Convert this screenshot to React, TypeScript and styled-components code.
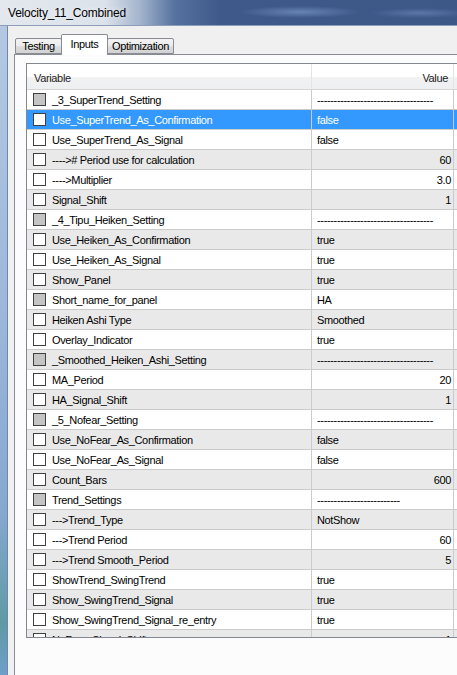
import React from 'react'
import styled, { createGlobalStyle } from 'styled-components'

const GlobalStyle = createGlobalStyle`
  html, body {
    margin: 0;
    padding: 0;
    background: #f0f0f0;
  }
  body {
    font-family: "Liberation Sans", Arial, sans-serif;
    font-size: 11px;
    letter-spacing: -0.35px;
    color: #000;
  }
`

const Window = styled.div`
  display: flex;
  flex-direction: column;
  width: 100%;
  height: 100vh;
  overflow: hidden;
`

const TitleBar = styled.div`
  display: flex;
  align-items: center;
  height: 25px;
  flex-shrink: 0;
  padding-left: 8px;
  border-bottom: 1px solid #8b9fbd;
  background:
    radial-gradient(ellipse 60px 6px at 300px 12px, rgba(120, 150, 200, 0.7), transparent),
    radial-gradient(ellipse 50px 5px at 420px 13px, rgba(110, 140, 190, 0.6), transparent),
    linear-gradient(90deg, #e3e8ee 0, #dbe2ea 105px, #a3b4cc 140px, #55719f 175px, #3f5a8a 220px, #3d5787 100%);
`

const TitleText = styled.span`
  font-size: 12px;
  letter-spacing: -0.2px;
  color: #000;
  text-shadow: 0 0 6px rgba(255, 255, 255, 0.9);
`

const Frame = styled.div`
  display: flex;
  flex: 1;
  min-height: 0;
`

const LeftEdge = styled.div`
  width: 7px;
  flex-shrink: 0;
  border-right: 1px solid #6f87aa;
  background: linear-gradient(180deg, #b4c8e2 0, #9fb9db 40%, #86a8cf 75%, #5f9aa4 92%, #6e9fc8 100%);
`

const Body = styled.div`
  display: flex;
  flex-direction: column;
  flex: 1;
  min-width: 0;
  padding: 8px 0 0 6px;
  background: #f0f0f0;
`

const TabStrip = styled.div`
  display: flex;
  align-items: flex-end;
  height: 20px;
  padding-left: 1px;
  position: relative;
  z-index: 1;
`

const Tab = styled.div<{ $active?: boolean; $w: number }>`
  display: flex;
  align-items: center;
  justify-content: center;
  box-sizing: border-box;
  width: ${p => p.$w}px;
  height: ${p => (p.$active ? 21 : 16)}px;
  margin-bottom: ${p => (p.$active ? -1 : 0)}px;
  padding-bottom: ${p => (p.$active ? 3 : 0)}px;
  border: 1px solid #898c95;
  border-bottom: ${p => (p.$active ? 'none' : '1px solid #898c95')};
  border-radius: 2px 2px 0 0;
  margin-right: -1px;
  background: ${p =>
    p.$active ? '#ffffff' : 'linear-gradient(180deg, #f3f3f3 0, #ebebeb 50%, #dedede 51%, #d2d2d2 100%)'};
`

const TabPanel = styled.div`
  flex: 1;
  margin-right: -40px;
  padding: 8px 0 0 11px;
  border-top: 1px solid #898c95;
  border-left: 1px solid #898c95;
  background: #fcfcfc;
`

const Grid = styled.div`
  box-sizing: border-box;
  height: 575px;
  overflow: hidden;
  border: 1px solid #828790;
  border-right: none;
  background: #ffffff;
`

const cols = '285px 142px 1fr'

const HeaderRow = styled.div`
  display: grid;
  grid-template-columns: ${cols};
  box-sizing: border-box;
  height: 26px;
  border-bottom: 1px solid #d5d5d5;
  background: linear-gradient(180deg, #ffffff 0, #ffffff 50%, #f2f2f3 51%, #eeeff1 100%);
`

const HeaderCell = styled.div<{ $right?: boolean }>`
  display: flex;
  align-items: center;
  justify-content: ${p => (p.$right ? 'flex-end' : 'flex-start')};
  padding: 2px ${p => (p.$right ? 5 : 0)}px 0 ${p => (p.$right ? 0 : 7)}px;
  border-right: 1px solid #e3e4e6;
  color: #1e1e1e;
`

const Row = styled.div<{ $shade?: boolean; $selected?: boolean }>`
  display: grid;
  grid-template-columns: ${cols};
  box-sizing: border-box;
  height: 20px;
  border-bottom: 1px solid #cbcbcb;
  background: ${p => (p.$selected ? '#3399ff' : p.$shade ? '#e9e9e9' : '#ffffff')};
  color: ${p => (p.$selected ? '#ffffff' : '#000000')};
`

const NameCell = styled.div`
  display: flex;
  align-items: center;
  gap: 6px;
  padding-left: 6px;
  border-right: 1px solid #cbcbcb;
  white-space: nowrap;
  overflow: hidden;
`

const ValueCell = styled.div<{ $right?: boolean }>`
  display: flex;
  align-items: center;
  justify-content: ${p => (p.$right ? 'flex-end' : 'flex-start')};
  padding: 0 ${p => (p.$right ? 2 : 0)}px 0 ${p => (p.$right ? 0 : 5)}px;
  border-right: 1px solid #cbcbcb;
  white-space: nowrap;
  overflow: hidden;
`

const Filler = styled.div``

const Check = styled.span<{ $disabled?: boolean }>`
  display: inline-block;
  box-sizing: border-box;
  width: 13px;
  height: 13px;
  flex-shrink: 0;
  border: 1px solid #404040;
  background: ${p => (p.$disabled ? '#c4c4c4' : '#ffffff')};
`

type Param = { name: string; value: string; kind?: 'num' | 'str' }

const dashes = (n: number) => '-'.repeat(n)

const params: Param[] = [
  { name: '_3_SuperTrend_Setting', value: dashes(35), kind: 'str' },
  { name: 'Use_SuperTrend_As_Confirmation', value: 'false' },
  { name: 'Use_SuperTrend_As_Signal', value: 'false' },
  { name: '----># Period use for calculation', value: '60', kind: 'num' },
  { name: '---->Multiplier', value: '3.0', kind: 'num' },
  { name: 'Signal_Shift', value: '1', kind: 'num' },
  { name: '_4_Tipu_Heiken_Setting', value: dashes(35), kind: 'str' },
  { name: 'Use_Heiken_As_Confirmation', value: 'true' },
  { name: 'Use_Heiken_As_Signal', value: 'true' },
  { name: 'Show_Panel', value: 'true' },
  { name: 'Short_name_for_panel', value: 'HA', kind: 'str' },
  { name: 'Heiken Ashi Type', value: 'Smoothed' },
  { name: 'Overlay_Indicator', value: 'true' },
  { name: '_Smoothed_Heiken_Ashi_Setting', value: dashes(35), kind: 'str' },
  { name: 'MA_Period', value: '20', kind: 'num' },
  { name: 'HA_Signal_Shift', value: '1', kind: 'num' },
  { name: '_5_Nofear_Setting', value: dashes(35), kind: 'str' },
  { name: 'Use_NoFear_As_Confirmation', value: 'false' },
  { name: 'Use_NoFear_As_Signal', value: 'false' },
  { name: 'Count_Bars', value: '600', kind: 'num' },
  { name: 'Trend_Settings', value: dashes(25), kind: 'str' },
  { name: '--->Trend_Type', value: 'NotShow' },
  { name: '--->Trend Period', value: '60', kind: 'num' },
  { name: '--->Trend Smooth_Period', value: '5', kind: 'num' },
  { name: 'ShowTrend_SwingTrend', value: 'true' },
  { name: 'Show_SwingTrend_Signal', value: 'true' },
  { name: 'Show_SwingTrend_Signal_re_entry', value: 'true' },
  { name: 'NoFear_Signal_Shift', value: '1', kind: 'num' },
]

const tabs = [
  { label: 'Testing', width: 47 },
  { label: 'Inputs', width: 47, active: true },
  { label: 'Optimization', width: 67 },
]

const App: React.FC = () => {
  return (
    <Window>
      <GlobalStyle />
      <TitleBar>
        <TitleText>Velocity_11_Combined</TitleText>
      </TitleBar>
      <Frame>
        <LeftEdge />
        <Body>
          <TabStrip>
            {tabs.map(tab => (
              <Tab key={tab.label} $active={tab.active} $w={tab.width}>
                {tab.label}
              </Tab>
            ))}
          </TabStrip>
          <TabPanel>
            <Grid>
              <HeaderRow>
                <HeaderCell>Variable</HeaderCell>
                <HeaderCell $right>Value</HeaderCell>
                <Filler />
              </HeaderRow>
              {params.map((p, i) => (
                <Row key={p.name} $shade={i % 2 === 1} $selected={i === 1}>
                  <NameCell>
                    <Check $disabled={p.kind === 'str'} />
                    {p.name}
                  </NameCell>
                  <ValueCell $right={p.kind === 'num'}>{p.value}</ValueCell>
                  <Filler />
                </Row>
              ))}
            </Grid>
          </TabPanel>
        </Body>
      </Frame>
    </Window>
  )
}

export default App
